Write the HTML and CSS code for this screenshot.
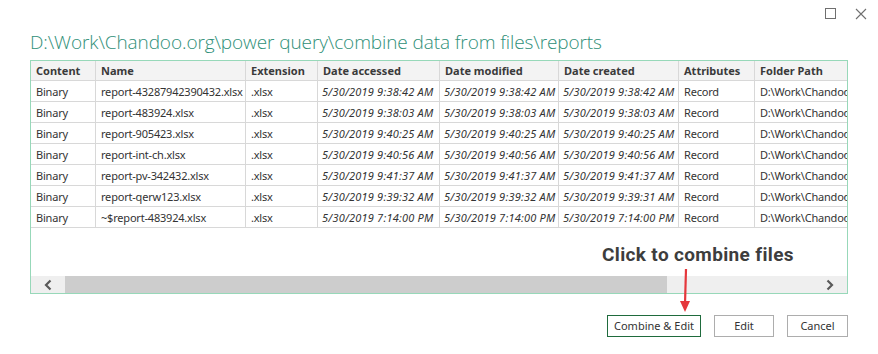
FILE: index.html
```html
<!DOCTYPE html>
<html lang="en">

<head>
  <meta charset="UTF-8">
  <title>combine data from files</title>
  <link rel="stylesheet" href="styles.css">
</head>

<body>
  <div class="dialog">
    <div class="window-bar">
      <span class="win-btn max"></span>
      <span class="win-btn close">
        <svg width="12" height="12" viewBox="0 0 12 12"><path d="M1 1L11 11M11 1L1 11" stroke="#6f6f6f" stroke-width="1.1" fill="none"/></svg>
      </span>
    </div>

    <h1 class="path-title">D:\Work\Chandoo.org\power query\combine data from files\reports</h1>

    <div class="grid-box">
      <div class="grid-view">
        <table class="files">
          <thead>
            <tr>
              <th class="c-content">Content</th>
              <th class="c-name">Name</th>
              <th class="c-ext">Extension</th>
              <th class="c-date">Date accessed</th>
              <th class="c-date2">Date modified</th>
              <th class="c-date3">Date created</th>
              <th class="c-attr">Attributes</th>
              <th class="c-folder">Folder Path</th>
            </tr>
          </thead>
          <tbody>
            <tr>
              <td>Binary</td><td>report-43287942390432.xlsx</td><td>.xlsx</td>
              <td class="dt">5/30/2019 9:38:42 AM</td><td class="dt">5/30/2019 9:38:42 AM</td><td class="dt">5/30/2019 9:38:42 AM</td>
              <td>Record</td><td>D:\Work\Chandoo</td>
            </tr>
            <tr>
              <td>Binary</td><td>report-483924.xlsx</td><td>.xlsx</td>
              <td class="dt">5/30/2019 9:38:03 AM</td><td class="dt">5/30/2019 9:38:03 AM</td><td class="dt">5/30/2019 9:38:03 AM</td>
              <td>Record</td><td>D:\Work\Chandoo</td>
            </tr>
            <tr>
              <td>Binary</td><td>report-905423.xlsx</td><td>.xlsx</td>
              <td class="dt">5/30/2019 9:40:25 AM</td><td class="dt">5/30/2019 9:40:25 AM</td><td class="dt">5/30/2019 9:40:25 AM</td>
              <td>Record</td><td>D:\Work\Chandoo</td>
            </tr>
            <tr>
              <td>Binary</td><td>report-int-ch.xlsx</td><td>.xlsx</td>
              <td class="dt">5/30/2019 9:40:56 AM</td><td class="dt">5/30/2019 9:40:56 AM</td><td class="dt">5/30/2019 9:40:56 AM</td>
              <td>Record</td><td>D:\Work\Chandoo</td>
            </tr>
            <tr>
              <td>Binary</td><td>report-pv-342432.xlsx</td><td>.xlsx</td>
              <td class="dt">5/30/2019 9:41:37 AM</td><td class="dt">5/30/2019 9:41:37 AM</td><td class="dt">5/30/2019 9:41:37 AM</td>
              <td>Record</td><td>D:\Work\Chandoo</td>
            </tr>
            <tr>
              <td>Binary</td><td>report-qerw123.xlsx</td><td>.xlsx</td>
              <td class="dt">5/30/2019 9:39:32 AM</td><td class="dt">5/30/2019 9:39:32 AM</td><td class="dt">5/30/2019 9:39:31 AM</td>
              <td>Record</td><td>D:\Work\Chandoo</td>
            </tr>
            <tr>
              <td>Binary</td><td>~$report-483924.xlsx</td><td>.xlsx</td>
              <td class="dt">5/30/2019 7:14:00 PM</td><td class="dt">5/30/2019 7:14:00 PM</td><td class="dt">5/30/2019 7:14:00 PM</td>
              <td>Record</td><td>D:\Work\Chandoo</td>
            </tr>
          </tbody>
        </table>
      </div>

      <div class="hscroll">
        <div class="arrow-btn">
          <svg width="10" height="12" viewBox="0 0 10 12"><path d="M7.5 1.5L3 6L7.5 10.5" stroke="#5a5a5a" stroke-width="2.2" fill="none"/></svg>
        </div>
        <div class="track">
          <div class="thumb"></div>
        </div>
        <div class="arrow-btn">
          <svg width="10" height="12" viewBox="0 0 10 12"><path d="M2.5 1.5L7 6L2.5 10.5" stroke="#5a5a5a" stroke-width="2.2" fill="none"/></svg>
        </div>
      </div>
    </div>

    <div class="callout">Click to combine files</div>
    <svg class="callout-arrow" width="16" height="46" viewBox="0 0 16 46">
      <path d="M9 1L8 36" stroke="#e5373c" stroke-width="2.2" fill="none"/>
      <path d="M3 33L8 44L13 33Z" fill="#e5373c"/>
    </svg>

    <div class="actions">
      <button class="btn primary">Combine &amp; Edit</button>
      <button class="btn edit">Edit</button>
      <button class="btn cancel">Cancel</button>
    </div>
  </div>
</body>

</html>
```

FILE: styles.css
```css
body {
  margin: 0;
  background: #fff;
  font-family: "Noto Sans", "Open Sans", sans-serif;
}

.dialog {
  position: relative;
  width: 878px;
  height: 354px;
  box-sizing: border-box;
  padding: 0 30px 0 30px;
}

.window-bar {
  display: flex;
  justify-content: flex-end;
  align-items: center;
  gap: 19px;
  height: 27px;
  margin-right: -19px;
}

.win-btn.max {
  width: 9px;
  height: 9px;
  border: 1px solid #6f6f6f;
}

.win-btn.close svg {
  display: block;
}

.path-title {
  margin: 0;
  height: 33px;
  font-family: "Open Sans", sans-serif;
  font-weight: 300;
  font-size: 19px;
  line-height: 30px;
  color: #2f8f78;
  white-space: nowrap;
  letter-spacing: -0.1px;
}

.grid-box {
  width: 818px;
  height: 234px;
  box-sizing: border-box;
  border: 1px solid #97d8b9;
  display: flex;
  flex-direction: column;
}

.grid-view {
  flex: 1;
  overflow: hidden;
}

.files {
  border-collapse: separate;
  border-spacing: 0;
  table-layout: fixed;
  width: 860px;
  font-size: 11px;
  letter-spacing: -0.2px;
  color: #333;
}

.files th,
.files td {
  box-sizing: border-box;
  height: 21px;
  padding: 0 5px;
  border-right: 1px solid #d8d8d8;
  border-bottom: 1px solid #d8d8d8;
  text-align: left;
  white-space: nowrap;
  overflow: hidden;
}

.files th {
  height: 20px;
  background: #f3f3f3;
  font-weight: 700;
  color: #3a3a3a;
  letter-spacing: 0;
}

.files td.dt {
  font-style: italic;
  padding: 0 4px;
  letter-spacing: 0.2px;
}

.c-content { width: 65px; }
.c-name { width: 150px; }
.c-ext { width: 72px; }
.c-date { width: 122px; }
.c-date2 { width: 119px; }
.c-date3 { width: 120px; }
.c-attr { width: 76px; }
.c-folder { width: 136px; }

.hscroll {
  display: flex;
  height: 17px;
  background: #efefef;
}

.arrow-btn {
  width: 34px;
  display: flex;
  align-items: center;
  justify-content: center;
}

.arrow-btn svg {
  display: block;
}

.track {
  flex: 1;
}

.thumb {
  width: 602px;
  height: 100%;
  background: #cdcdcd;
}

.callout {
  position: absolute;
  left: 602px;
  top: 243px;
  font-family: "Roboto", "Liberation Sans", sans-serif;
  font-weight: 700;
  font-size: 19px;
  line-height: 24px;
  color: #3d3d3d;
  letter-spacing: 0.35px;
}

.callout-arrow {
  position: absolute;
  left: 677px;
  top: 268px;
}

.actions {
  display: flex;
  justify-content: flex-end;
  gap: 13px;
  margin-top: 21px;
  width: 818px;
}

.btn {
  height: 22px;
  padding: 0;
  background: #fff;
  border: 1px solid #adadad;
  border-radius: 0;
  font-family: "Noto Sans", "Open Sans", sans-serif;
  font-size: 11px;
  color: #333;
  line-height: 18px;
}

.btn.primary {
  width: 94px;
  border-color: #1f6b3d;
}

.btn.edit {
  width: 60px;
}

.btn.cancel {
  width: 61px;
}
```
